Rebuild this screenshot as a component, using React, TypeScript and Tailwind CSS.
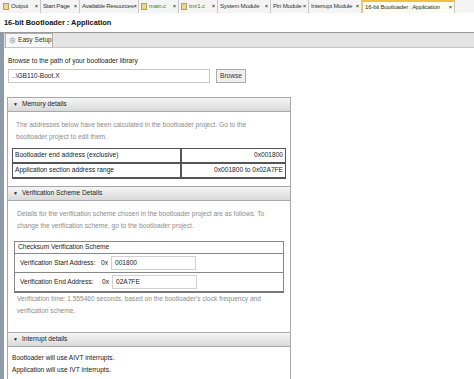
import React from "react";
import { Settings } from "lucide-react";

const Tab = ({ label, w, icon, green, active }: { label: string; w: number; icon?: boolean; green?: boolean; active?: boolean }) => (
  <div
    className={
      "flex items-center h-[13px] shrink-0 border-r border-[#c8c8c8] pl-[2px] pr-[2px] " +
      (active ? "bg-[#fdfcf3] border-t-2 border-t-[#f0c040] border-l border-l-[#d8c890]" : "")
    }
    style={{ width: w }}
  >
    {icon && (
      <span className="w-[6px] h-[7px] mr-[2px] bg-[#e8d89a] border border-[#b8a050] shrink-0" />
    )}
    <span className={"whitespace-nowrap flex-1 tracking-[-0.2px] " + (green ? "text-[#2e8b2e]" : "text-[#333]")}>{label}</span>
    <span className="text-[5px] text-[#333] shrink-0 font-bold">×</span>
  </div>
);

const Header = ({ title }: { title: string }) => (
  <div className="h-[15px] flex items-center pl-[5px] border-y border-[#a8a8a8] bg-gradient-to-b from-[#f6f6f6] to-[#d9d9d9] text-[#222]">
    <span className="text-[5px] mr-[4px]">▼</span>
    <span>{title}</span>
  </div>
);

export default function App() {
  return (
    <div
      className="w-[474px] h-[379px] bg-white overflow-hidden text-[6.6px] text-[#222] leading-none"
      style={{ fontFamily: '"Liberation Sans", Arial, sans-serif' }}
    >
      {/* tab bar */}
      <div className="flex h-[13px] bg-[#f4f4f4] pl-[1px] text-[6.1px]">
        <Tab label="Output" w={40} icon />
        <Tab label="Start Page" w={39} />
        <Tab label="Available Resources" w={59} />
        <Tab label="main.c" w={40} icon green />
        <Tab label="tmr1.c" w={39} icon green />
        <Tab label="System Module" w={53} />
        <Tab label="Pin Module" w={38} />
        <Tab label="Interrupt Module" w={53} />
        <Tab label="16-bit Bootloader : Application" w={93} active />
      </div>
      {/* title */}
      <div className="h-[19px] flex items-center pl-[4px] font-bold text-[7.4px] text-[#111]">
        16-bit Bootloader : Application
      </div>
      <div className="flex h-[347px] border-t border-[#9a9a9a]">
        <div className="w-[4px] bg-[#8e9bab] shrink-0" />
        <div className="flex-1 flex flex-col">
          <div className="h-[16px] bg-[#e4e4e4] border-b border-[#c4c4c4] flex items-end pl-[1px]">
            <div className="h-[14px] w-[48px] bg-[#f8f8f8] border border-b-0 border-[#b0b0b0] flex items-center pl-[3px] text-[#333] whitespace-nowrap">
              <Settings className="w-[7px] h-[7px] mr-[2px] text-[#7a8a9a]" strokeWidth={2} />
              Easy Setup
            </div>
          </div>
          <div className="pl-[4px] pt-[8px]">
            <div className="h-[10px] flex items-center">Browse to the path of your bootloader library</div>
            <div className="flex items-center mt-[3px] h-[14px]">
              <div className="w-[202px] h-[14px] border border-[#c8c8c8] flex items-center pl-[3px]">..\GB110-Boot.X</div>
              <div className="ml-[6px] w-[30px] h-[14px] border border-[#acacac] bg-[#efefef] flex items-center justify-center text-[#333]">Browse</div>
            </div>
            {/* panel */}
            <div className="-ml-[1px] mt-[14px] w-[284px] h-[283px] border-x border-b border-[#a8a8a8] flex flex-col">
              <Header title="Memory details" />
              <div className="text-[#8c8c8c] pl-[8px] pt-[7px] leading-[12px]">
                The addresses below have been calculated in the bootloader project. Go to the<br />
                bootloader project to edit them.
              </div>
              <div className="mx-[4px] mt-[5px] border border-[#555] border-b-2">
                <div className="flex h-[15px] border-b-2 border-[#555]">
                  <div className="w-[169px] border-r-2 border-[#555] flex items-center pl-[2px]">Bootloader end address (exclusive)</div>
                  <div className="flex-1 flex items-center justify-end pr-[2px]">0x001800</div>
                </div>
                <div className="flex h-[13px]">
                  <div className="w-[169px] border-r-2 border-[#555] flex items-center pl-[2px]">Application section address range</div>
                  <div className="flex-1 flex items-center justify-end pr-[2px]">0x001800 to 0x02A7FE</div>
                </div>
              </div>
              <div className="mt-[7px]">
                <Header title="Verification Scheme Details" />
              </div>
              <div className="text-[#8c8c8c] pl-[9px] pt-[7px] leading-[12px]">
                Details for the verification scheme chosen in the bootloader project are as follows. To<br />
                change the verification scheme, go to the bootloader project.
              </div>
              <div className="mx-[6px] mt-[9px] border border-[#888] border-b-2 border-b-[#777]">
                <div className="h-[12px] flex items-center pl-[3px] border-b border-[#888]">Checksum Verification Scheme</div>
                <div className="h-[19px] flex items-center pl-[5px] border-b border-[#888]">
                  <span className="w-[81px]">Verification Start Address:</span>
                  <span>0x</span>
                  <div className="ml-[3px] w-[85px] h-[14px] border border-[#d0d0d0] flex items-center pl-[3px]">001800</div>
                </div>
                <div className="h-[18px] flex items-center pl-[5px]">
                  <span className="w-[82px]">Verification End Address:</span>
                  <span>0x</span>
                  <div className="ml-[3px] w-[85px] h-[14px] border border-[#d0d0d0] flex items-center pl-[3px]">02A7FE</div>
                </div>
              </div>
              <div className="text-[#8c8c8c] pl-[9px] leading-[12px]">
                Verification time: 1.555460 seconds, based on the bootloader's clock frequency and<br />
                verification scheme.
              </div>
              <div className="mt-[15px]">
                <Header title="Interrupt details" />
              </div>
              <div className="pl-[4px] pt-[5px] leading-[12px] text-[#222]">
                Bootloader will use AIVT interrupts.<br />
                Application will use IVT interrupts.
              </div>
            </div>
          </div>
        </div>
      </div>
    </div>
  );
}
